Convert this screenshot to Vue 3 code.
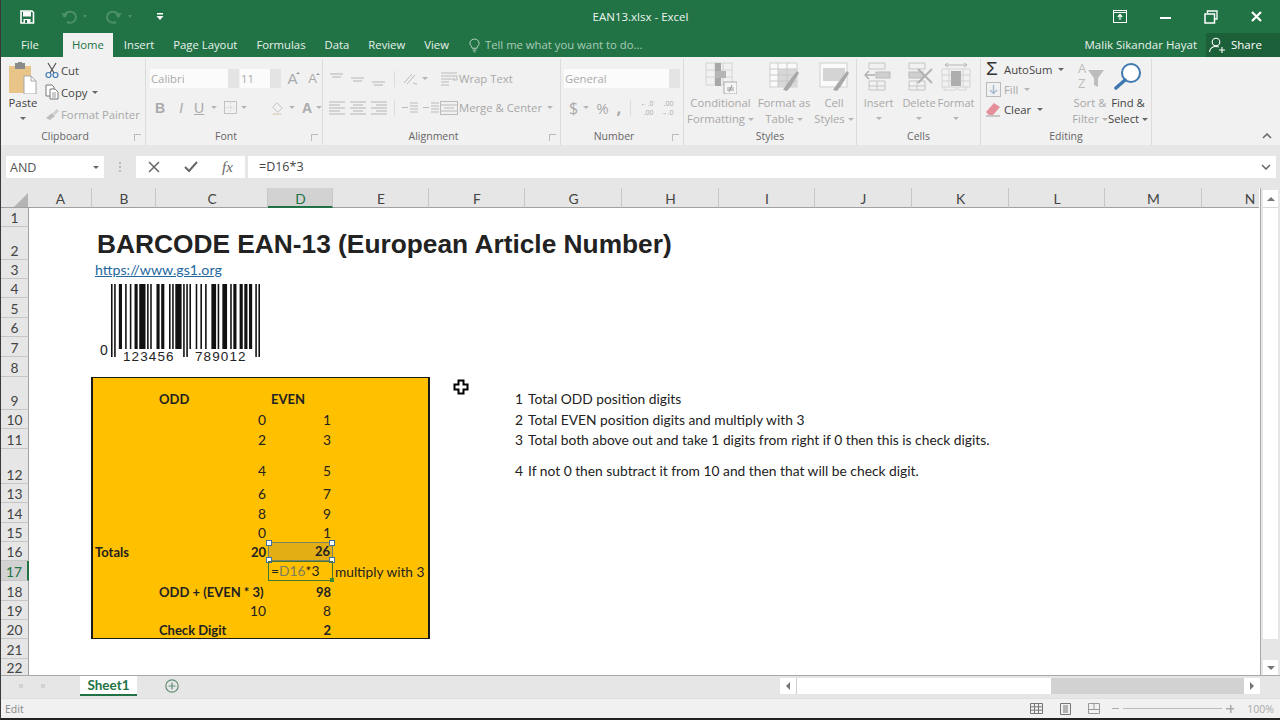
<template>
  <div class="excel">
    <!-- Title bar -->
    <div class="titlebar">
      <div class="qat">
        <svg width="16" height="16" viewBox="0 0 16 16" class="save"><path d="M2 2h11l1.500 1.500V14H2z" fill="none" stroke="#fff" stroke-width="1.600"/><rect x="4" y="2.500" width="8" height="5" fill="#fff"/><rect x="4.500" y="10" width="7" height="4" fill="#fff"/><rect x="6" y="11" width="2" height="3" fill="#217346"/></svg>
        <svg width="18" height="16" viewBox="0 0 18 16" class="undo"><path d="M4 8a6 5.500 0 1 1 3 5" fill="none" stroke="#4c9068" stroke-width="2"/><path d="M1 4l4 5 3-4.500z" fill="#4c9068"/></svg>
        <span class="qat-caret"></span>
        <svg width="18" height="16" viewBox="0 0 18 16" class="redo"><path d="M14 8a6 5.500 0 1 0-3 5" fill="none" stroke="#4c9068" stroke-width="2"/><path d="M17 4l-4 5-3-4.500z" fill="#4c9068"/></svg>
        <span class="qat-caret"></span>
        <svg width="8" height="8" viewBox="0 0 8 8" class="qat-more"><rect x="1" y="0" width="6" height="1.500" fill="#fff"/><path d="M0.500 3h7L4 7z" fill="#fff"/></svg>
      </div>
      <div class="doc-title">EAN13.xlsx - Excel</div>
      <div class="win-btns">
        <svg width="14" height="13" viewBox="0 0 14 13"><rect x="0.500" y="0.500" width="13" height="12" fill="none" stroke="#fff"/><path d="M1 2.500h12" stroke="#fff"/><path d="M7 10V5M4.800 7L7 4.500 9.200 7" fill="none" stroke="#fff" stroke-width="1.200"/></svg>
        <svg width="11" height="13" viewBox="0 0 11 13"><rect x="0" y="7" width="11" height="2" fill="#fff"/></svg>
        <svg width="14" height="14" viewBox="0 0 14 14"><path d="M3.500 3V1h9.500v8h-2" fill="none" stroke="#fff" stroke-width="1.300"/><rect x="1" y="4" width="9.500" height="9" fill="none" stroke="#fff" stroke-width="1.500"/></svg>
        <svg width="11" height="11" viewBox="0 0 11 11"><path d="M1 1l9 9M10 1l-9 9" stroke="#fff" stroke-width="2.200"/></svg>
      </div>
    </div>

    <!-- Tabs -->
    <div class="tabs">
      <span class="tab file">File</span>
      <span v-for="t in tabs" :key="t" class="tab" :class="{ active: t === 'Home' }">{{ t }}</span>
      <span class="tell">
        <svg width="11" height="15" viewBox="0 0 12 15"><path d="M3.500 10.500C3 8 1 7.500 1 5a5 4.500 0 0 1 10 0c0 2.500-2 3-2.500 5.500zM4 12.500h4M5 14.500h2" fill="none" stroke="#c8dccf" stroke-width="1"/></svg>
        Tell me what you want to do...
      </span>
      <span class="user">Malik Sikandar Hayat</span>
      <span class="share">
        <svg width="16" height="16" viewBox="0 0 16 16"><circle cx="7" cy="5" r="3.800" fill="none" stroke="#fff" stroke-width="1.100"/><path d="M0.500 15c.5-4 3-5.500 6.500-5.500 1 0 2 .2 2.800.6M10 13h6M13 10v6" fill="none" stroke="#fff" stroke-width="1.100"/></svg>
        Share
      </span>
    </div>

    <!-- Ribbon -->
    <div class="ribbon">
      <div class="group" style="width: 145px">
        <div class="group-body">
          <div class="big paste-btn">
            <div class="big-icon">
              <svg width="28" height="32" viewBox="0 0 28 32"><rect x="0" y="4" width="22" height="27" fill="#e8c488"/><rect x="6" y="1" width="10" height="6" fill="#8a8a8a"/><rect x="9" y="0" width="4" height="3" fill="#8a8a8a"/><path d="M15 14h7l5 5v13H15z" fill="#fff" stroke="#a8a8a8"/><path d="M22 14v5h5" fill="none" stroke="#a8a8a8"/></svg>
            </div>
            <div class="big-label on">Paste</div>
            <span class="caret on low"></span>
          </div>
          <div class="stack clip">
            <div class="small on">
              <svg width="14" height="16" viewBox="0 0 14 16"><path d="M3 1l6 10M11 1L5 11" stroke="#555" stroke-width="1.200"/><circle cx="3.500" cy="13" r="2.500" fill="none" stroke="#3d7ab5" stroke-width="1.200"/><circle cx="10.500" cy="13" r="2.500" fill="none" stroke="#3d7ab5" stroke-width="1.200"/></svg>
              Cut
            </div>
            <div class="small on">
              <svg width="14" height="16" viewBox="0 0 14 16"><path d="M1 1h6l2 2v9H1z" fill="#fff" stroke="#777"/><path d="M5 5h5l3 3v7H5z" fill="#fff" stroke="#777"/><path d="M7 9h4M7 11h4M7 13h4" stroke="#999"/></svg>
              Copy <span class="caret on mini"></span>
            </div>
            <div class="small off">
              <svg width="14" height="16" viewBox="0 0 14 16"><path d="M1 12l6-5 3 3-5 4z" fill="#bcbcbc"/><path d="M8 7l4-4 2 2-4 4z" fill="#cfcfcf"/></svg>
              Format Painter
            </div>
          </div>
        </div>
        <div class="group-label has-launcher">Clipboard</div>
        <span class="launcher"></span>
      </div>

      <div class="group" style="width: 177px">
        <div class="group-body rows" style="padding-left: 4px">
          <div class="row">
            <div class="combo" style="width: 89px"><span class="combo-text">Calibri</span><span class="combo-drop"></span></div>
            <div class="combo" style="width: 41px; margin-left: 1px"><span class="combo-text">11</span><span class="combo-drop"></span></div>
            <span class="font-grow big-a">A</span>
            <span class="font-grow small-a">A</span>
          </div>
          <div class="row fmt">
            <b class="fmt-b">B</b>
            <i class="fmt-i">I</i>
            <u class="fmt-u">U</u>
            <span class="caret"></span>
            <svg width="15" height="15" viewBox="0 0 15 15" class="bd"><rect x="0.500" y="0.500" width="14" height="14" fill="none" stroke="#bbb"/><path d="M7.500 2v11M2 7.500h11" stroke="#bbb" stroke-dasharray="1 2"/></svg>
            <span class="caret"></span>
            <svg width="16" height="16" viewBox="0 0 16 16" class="fill"><path d="M7 2l6 6-5 5-6-6z" fill="none" stroke="#bbb"/><path d="M2 15h10" stroke="#e0d8c8" stroke-width="2"/></svg>
            <span class="caret"></span>
            <span class="fmt-a">A</span>
            <span class="caret"></span>
          </div>
        </div>
        <div class="group-label has-launcher">Font</div>
        <span class="launcher"></span>
      </div>

      <div class="group" style="width: 238px">
        <div class="group-body">
          <div class="rows align-left">
            <div class="row icons">
              <svg v-for="a in vAligns" :key="a" width="18" height="16" viewBox="0 0 18 16"><path :d="a" fill="none" stroke="#b5b5b5"/></svg>
              <span class="sep"></span>
              <svg width="18" height="16" viewBox="0 0 18 16"><path d="M3 12L11 3M6 13l8-9M12 12l4 1" fill="none" stroke="#bbb"/></svg>
              <span class="caret"></span>
            </div>
            <div class="row icons second">
              <svg v-for="a in hAligns" :key="a" width="18" height="16" viewBox="0 0 18 16"><path :d="a" fill="none" stroke="#b5b5b5"/></svg>
              <span class="sep"></span>
              <svg width="18" height="16" viewBox="0 0 18 16"><path d="M9 3h8M9 6h8M9 9h8M9 12h8M1 7.500h6" fill="none" stroke="#bbb"/></svg>
              <svg width="18" height="16" viewBox="0 0 18 16"><path d="M9 3h8M9 6h8M9 9h8M9 12h8M1 7.500h6" fill="none" stroke="#bbb"/></svg>
            </div>
          </div>
          <div class="rows wrap-col">
            <div class="row off-text">
              <svg width="18" height="16" viewBox="0 0 18 16"><path d="M1 2h16M1 5h12M1 8h12M1 11h8M1 14h8M13 5h4v4h-4l2-2" fill="none" stroke="#bbb"/></svg>
              Wrap Text
            </div>
            <div class="row off-text second">
              <svg width="18" height="16" viewBox="0 0 18 16"><rect x="0.500" y="1.500" width="17" height="13" fill="none" stroke="#bbb"/><path d="M1 5h16M1 11h16M4 8h10" stroke="#bbb"/></svg>
              Merge &amp; Center <span class="caret"></span>
            </div>
          </div>
        </div>
        <div class="group-label has-launcher">Alignment</div>
        <span class="launcher"></span>
      </div>

      <div class="group" style="width: 123px">
        <div class="group-body rows" style="padding-left: 3px">
          <div class="row">
            <div class="combo" style="width: 116px"><span class="combo-text">General</span><span class="combo-drop"></span></div>
          </div>
          <div class="row num-row">
            <span class="dollar">$</span><span class="caret"></span>
            <span class="pct">%</span>
            <span class="comma">,</span>
            <span class="sep"></span>
            <span class="dec"><span>←.0</span><span>.00</span></span>
            <span class="dec"><span>.00</span><span>→.0</span></span>
          </div>
        </div>
        <div class="group-label has-launcher">Number</div>
        <span class="launcher"></span>
      </div>

      <div class="group" style="width: 173px">
        <div class="group-body" style="padding-left: 4px">
          <div class="big" style="width: 65px">
            <div class="big-icon">
              <svg width="32" height="32" viewBox="0 0 32 32"><path d="M1 1h26v22H1zM1 8h26M1 15h26M10 1v22M18 1v22" fill="none" stroke="#d4d4d4"/><rect x="10" y="1" width="6" height="8" fill="#a8a8a8"/><rect x="10" y="9" width="11" height="7" fill="#b5b5b5"/><rect x="10" y="16" width="6" height="8" fill="#a8a8a8"/><rect x="19" y="20" width="13" height="12" fill="#f6f6f6" stroke="#aaa"/><path d="M22 26h7M22 28h7M27 23l-3 7" stroke="#999"/></svg>
            </div>
            <div class="big-label">Conditional</div>
            <div class="big-label">Formatting <span class="caret"></span></div>
          </div>
          <div class="big" style="width: 62px">
            <div class="big-icon">
              <svg width="30" height="30" viewBox="0 0 30 30"><rect x="1" y="1" width="27" height="24" fill="#fafafa" stroke="#cfcfcf"/><rect x="9" y="7" width="19" height="18" fill="#d8d8d8"/><path d="M1 7h27M1 13h27M1 19h27M9 1v24M18 1v24" stroke="#c8c8c8"/><path d="M14 28l4-6 10-13 2 2-8 13-4 5z" fill="#a8a8a8"/></svg>
            </div>
            <div class="big-label">Format as</div>
            <div class="big-label">Table <span class="caret"></span></div>
          </div>
          <div class="big" style="width: 38px">
            <div class="big-icon">
              <svg width="30" height="30" viewBox="0 0 30 30"><rect x="1" y="1" width="27" height="24" fill="#fafafa" stroke="#cfcfcf"/><rect x="4" y="6" width="22" height="13" fill="#d4d4d4"/><path d="M14 28l4-6 10-13 2 2-8 13-4 5z" fill="#a8a8a8"/></svg>
            </div>
            <div class="big-label">Cell</div>
            <div class="big-label">Styles <span class="caret"></span></div>
          </div>
        </div>
        <div class="group-label">Styles</div>
      </div>

      <div class="group" style="width: 124px">
        <div class="group-body cells-body">
          <div class="big" style="width: 43px">
            <div class="big-icon">
              <svg width="30" height="30" viewBox="0 0 30 30"><path d="M5 1h16v6H5zM5 19h16v9H5zM13 19v9M5 24h16" fill="none" stroke="#c4c4c4"/><rect x="12" y="10" width="14" height="6" fill="#cfcfcf" stroke="#bbb"/><path d="M2 13h9M5 9l-4 4 4 4" fill="none" stroke="#b0b0b0" stroke-width="1.400"/></svg>
            </div>
            <div class="big-label">Insert</div>
            <span class="caret low"></span>
          </div>
          <div class="big" style="width: 38px">
            <div class="big-icon">
              <svg width="30" height="30" viewBox="0 0 30 30"><path d="M5 1h16v6H5zM5 19h16v9H5zM13 19v9M5 24h16" fill="none" stroke="#c4c4c4"/><rect x="5" y="10" width="14" height="6" fill="#cfcfcf" stroke="#bbb"/><path d="M14 7l14 14M28 7L14 21" stroke="#b0b0b0" stroke-width="1.800"/></svg>
            </div>
            <div class="big-label">Delete</div>
            <span class="caret low"></span>
          </div>
          <div class="big" style="width: 36px">
            <div class="big-icon">
              <svg width="30" height="32" viewBox="0 0 30 32"><path d="M4 3h22M4 3l3-2M4 3l3 2M26 3l-3-2M26 3l-3 2" fill="none" stroke="#b5b5b5"/><path d="M1 7h28v18H1zM8 7v18M22 7v18M1 13h28M1 19h28M3 25v3h12v-3M17 25v3h8v-3" fill="none" stroke="#d4d4d4"/><rect x="10" y="9" width="10" height="15" fill="#aeaeae"/></svg>
            </div>
            <div class="big-label">Format</div>
            <span class="caret low"></span>
          </div>
        </div>
        <div class="group-label">Cells</div>
      </div>

      <div class="group" style="width: 171px">
        <div class="group-body" style="padding-left: 5px">
          <div class="stack edit">
            <div class="small on">
              <span class="sigma">Σ</span>
              AutoSum <span class="caret on mini2"></span>
            </div>
            <div class="small off">
              <svg width="15" height="15" viewBox="0 0 15 15"><rect x="0.500" y="0.500" width="14" height="14" fill="none" stroke="#bbb"/><path d="M7.500 3v8M4 8l3.500 3.500L11 8" fill="none" stroke="#a5b9d0" stroke-width="1.400"/></svg>
              Fill <span class="caret"></span>
            </div>
            <div class="small on">
              <svg width="15" height="15" viewBox="0 0 15 15"><path d="M0 10l8-9 6 4-7 8H3z" fill="#e58f9c"/><path d="M0 14h14" stroke="#999"/></svg>
              Clear <span class="caret on"></span>
            </div>
          </div>
          <div class="big" style="width: 38px">
            <div class="big-icon">
              <svg width="30" height="30" viewBox="0 0 30 30"><path d="M13 8h16l-6 8v9l-4-2v-7z" fill="#bdbdbd"/></svg>
              <span class="az"><span>A</span><span>Z</span></span>
            </div>
            <div class="big-label">Sort &amp;</div>
            <div class="big-label">Filter <span class="caret"></span></div>
          </div>
          <div class="big" style="width: 38px">
            <div class="big-icon">
              <svg width="28" height="28" viewBox="0 0 28 28"><circle cx="17" cy="11" r="9" fill="#fff" stroke="#3f78b0" stroke-width="2"/><path d="M11 18L2 26" stroke="#3f78b0" stroke-width="3.500" stroke-linecap="round"/></svg>
            </div>
            <div class="big-label on">Find &amp;</div>
            <div class="big-label on">Select <span class="caret on"></span></div>
          </div>
        </div>
        <div class="group-label">Editing</div>
      </div>

      <svg width="10" height="6" viewBox="0 0 10 6" class="collapse"><path d="M1 5l4-4 4 4" fill="none" stroke="#666" stroke-width="1.500"/></svg>
    </div>

    <!-- Formula bar -->
    <div class="formula">
      <div class="namebox">AND<span class="caret on"></span></div>
      <div class="dots"></div>
      <div class="fx">
        <svg width="12" height="12" viewBox="0 0 12 12"><path d="M1 1l10 10M11 1L1 11" stroke="#666" stroke-width="1.500"/></svg>
        <svg width="14" height="12" viewBox="0 0 14 12" class="fx-check"><path d="M1 6l4 4 8-9" fill="none" stroke="#666" stroke-width="2"/></svg>
        <span class="fx-text">fx</span>
      </div>
      <div class="input">=D16*3
        <svg width="10" height="6" viewBox="0 0 10 6" class="input-drop"><path d="M1 1l4 4 4-4" fill="none" stroke="#666" stroke-width="1.500"/></svg>
      </div>
    </div>

    <!-- Sheet -->
    <div class="sheet-wrap">
      <div class="sheet">
        <div class="corner">
          <svg width="14" height="14" viewBox="0 0 14 14"><path d="M14 0v14H0z" fill="#b4b4b4"/></svg>
        </div>
        <div
          v-for="(c, i) in colNames"
          :key="c"
          class="col-head"
          :class="{ sel: c === 'D', last: c === 'N' }"
          :style="{ gridColumn: i + 2, gridRow: 1 }"
        >{{ c }}</div>
        <div
          v-for="r in rowCount"
          :key="r"
          class="row-head"
          :class="{ sel: r === 17, last: r === rowCount }"
          :style="{ gridColumn: 1, gridRow: r + 1 }"
        >{{ r }}</div>

        <div class="orange"></div>

        <div
          v-for="c in cells"
          :key="c.at"
          class="cell"
          :class="c.cls"
          :style="{ gridColumn: colIndex(c.at), gridRow: rowIndex(c.at) }"
        >{{ c.text }}</div>

        <div class="cell ref">
          26
          <i class="handle tl"></i><i class="handle tr"></i><i class="handle bl"></i><i class="handle br"></i>
        </div>
        <div class="cell editing">=<span class="ref-text">D16</span>*3<i class="fill-handle"></i></div>

        <!-- picture floating on the sheet -->
        <svg class="barcode" width="164" height="82" viewBox="0 0 164 82">
          <rect
            v-for="b in bars"
            :key="b.x"
            :x="b.x"
            y="1"
            :width="b.w"
            :height="b.long ? 73 : 65"
            fill="#111"
          />
          <text x="0" y="72" class="bar-text zero">0</text>
          <text x="23" y="78" class="bar-text">123456</text>
          <text x="95" y="78" class="bar-text">789012</text>
        </svg>

        <svg class="pointer" width="16" height="16" viewBox="0 0 16 16"><path d="M5.500 1.500h5v4h4v5h-4v4h-5v-4h-4v-5h4z" fill="#fff" stroke="#000" stroke-width="2"/></svg>
      </div>
      <div class="vscroll">
        <div class="sb-btn"><span class="up"></span></div>
        <div class="sb-thumb"></div>
        <div class="sb-btn down-btn"><span class="down"></span></div>
      </div>
    </div>

    <!-- Sheet tabs -->
    <div class="sheetbar">
      <span class="nav"></span><span class="nav"></span>
      <div class="sheet-tab">Sheet1</div>
      <svg width="14" height="14" viewBox="0 0 14 14" class="add"><circle cx="7" cy="7" r="6.200" fill="none" stroke="#5f8f74" stroke-width="1.200"/><path d="M7 3.500v7M3.500 7h7" stroke="#5f8f74" stroke-width="1.200"/></svg>
      <div class="hscroll">
        <div class="sb-btn h"><span class="left"></span></div>
        <div class="h-thumb"></div>
        <div class="sb-btn h"><span class="right"></span></div>
      </div>
    </div>

    <!-- Status bar -->
    <div class="status">
      <span class="mode">Edit</span>
      <div class="views">
        <svg width="13" height="11" viewBox="0 0 13 11"><path d="M.5.500h12v10H.5zM.5 3.800h12M.5 7.200h12M4.500.500v10M8.500.500v10" fill="none" stroke="#777"/></svg>
        <svg width="11" height="12" viewBox="0 0 11 12"><path d="M.5.500h10v11H.5zM3 3h5M3 5h5M3 7h5M3 9h5" fill="none" stroke="#777"/></svg>
        <svg width="12" height="11" viewBox="0 0 12 11"><path d="M.5.500h11v10H.5zM6 .500v6M.5 6.500h11" fill="none" stroke="#999"/></svg>
      </div>
      <div class="zoom">
        <span class="zoom-m"></span>
        <span class="zoom-line"></span>
        <span class="zoom-p"></span>
      </div>
      <span class="pct-zoom">100%</span>
    </div>
  </div>
</template>

<script setup>
const tabs = ['Home', 'Insert', 'Page Layout', 'Formulas', 'Data', 'Review', 'View']
const colNames = 'ABCDEFGHIJKLMN'.split('')
const rowCount = 22

const vAligns = ['M2 3h13M4 6h9', 'M2 7h13M4 10h9', 'M2 11h13M4 14h9']
const hAligns = [
  'M1 2h16M1 5h11M1 8h16M1 11h11M1 14h16',
  'M1 2h16M4 5h10M1 8h16M4 11h10M1 14h16',
  'M1 2h16M6 5h11M1 8h16M6 11h11M1 14h16',
]

const cells = [
  { at: 'B2', text: 'BARCODE EAN-13 (European Article Number)', cls: 'title' },
  { at: 'B3', text: 'https://www.gs1.org', cls: 'link' },
  { at: 'C9', text: 'ODD', cls: 'bold r9' },
  { at: 'D9', text: 'EVEN', cls: 'bold r9' },
  { at: 'C10', text: '0', cls: 'num' },
  { at: 'D10', text: '1', cls: 'num' },
  { at: 'C11', text: '2', cls: 'num' },
  { at: 'D11', text: '3', cls: 'num' },
  { at: 'C12', text: '4', cls: 'num tall' },
  { at: 'D12', text: '5', cls: 'num tall' },
  { at: 'C13', text: '6', cls: 'num' },
  { at: 'D13', text: '7', cls: 'num' },
  { at: 'C14', text: '8', cls: 'num' },
  { at: 'D14', text: '9', cls: 'num' },
  { at: 'C15', text: '0', cls: 'num' },
  { at: 'D15', text: '1', cls: 'num' },
  { at: 'B16', text: 'Totals', cls: 'bold' },
  { at: 'C16', text: '20', cls: 'num bold' },
  { at: 'E17', text: 'multiply with 3', cls: 'mul' },
  { at: 'C18', text: 'ODD + (EVEN * 3)', cls: 'bold' },
  { at: 'D18', text: '98', cls: 'num bold' },
  { at: 'C19', text: '10', cls: 'num' },
  { at: 'D19', text: '8', cls: 'num' },
  { at: 'C20', text: 'Check Digit', cls: 'bold' },
  { at: 'D20', text: '2', cls: 'num bold' },
  { at: 'F9', text: '1', cls: 'num r9' },
  { at: 'G9', text: 'Total ODD position digits', cls: 'plain r9' },
  { at: 'F10', text: '2', cls: 'num' },
  { at: 'G10', text: 'Total EVEN position digits and multiply with 3', cls: 'plain' },
  { at: 'F11', text: '3', cls: 'num' },
  { at: 'G11', text: 'Total both above out and take 1 digits from right if 0 then this is check digits.', cls: 'plain' },
  { at: 'F12', text: '4', cls: 'num tall' },
  { at: 'G12', text: 'If not 0 then subtract it from 10 and then that will be check digit.', cls: 'plain tall' },
]

function colIndex(at) {
  return at.charCodeAt(0) - 63
}

function rowIndex(at) {
  return Number(at.slice(1)) + 1
}

// EAN-13 bars for 0 123456 789012, first digit 0 means all left digits use the L set
const L = ['0001101', '0011001', '0010011', '0111101', '0100011', '0110001', '0101111', '0111011', '0110111', '0001011']
const flip = (s) => s.replace(/./g, (c) => (c === '0' ? '1' : '0'))

function buildBars() {
  const left = '123456'.split('').map((d) => L[d]).join('')
  const right = '789012'.split('').map((d) => flip(L[d])).join('')
  const code = '101' + left + '01010' + right + '101'
  const mod = 149 / 95
  const out = []
  let i = 0
  while (i < code.length) {
    if (code[i] === '1') {
      let n = 1
      while (code[i + n] === '1') n++
      const long = i < 3 || i > 91 || (i >= 45 && i < 50)
      out.push({ x: 11 + i * mod, w: n * mod, long })
      i += n
    } else {
      i++
    }
  }
  return out
}

const bars = buildBars()
</script>

<style>
html, body {
  margin: 0;
  padding: 0;
  background: #fff;
  overflow: hidden;
}
</style>

<style scoped>
.excel {
  width: 1280px;
  height: 720px;
  box-sizing: border-box;
  border-left: 1px solid #3a3a3a;
  border-bottom: 2px solid #222;
  display: flex;
  flex-direction: column;
  overflow: hidden;
  font-family: "Open Sans", "Liberation Sans", sans-serif;
  font-size: 11.3px;
  color: #444;
  background: #e6e6e6;
}

/* title bar */
.titlebar {
  height: 33px;
  flex: none;
  background: #217346;
  color: #fff;
  display: grid;
  grid-template-columns: 1fr auto 1fr;
  align-items: center;
}
.qat {
  display: flex;
  align-items: center;
}
.save {
  margin-left: 18px;
}
.undo {
  margin-left: 25px;
}
.redo {
  margin-left: 18px;
}
.qat-caret {
  width: 0;
  height: 0;
  margin-left: 5px;
  border-top: 3px solid #4c9068;
  border-left: 2px solid transparent;
  border-right: 2px solid transparent;
}
.qat-more {
  margin-left: 24px;
}
.doc-title {
  font-size: 11.5px;
  color: #eef5f0;
}
.win-btns {
  display: flex;
  align-items: center;
  justify-content: flex-end;
  gap: 33px;
  padding-right: 18px;
}

/* tabs */
.tabs {
  height: 24px;
  flex: none;
  background: #217346;
  color: #e8f1eb;
  display: flex;
  align-items: stretch;
  line-height: 24px;
}
.tab {
  padding: 0 10px;
  margin-right: -1px;
}
.tab.file {
  padding: 0;
  margin: 0 24px 0 20px;
}
.tab.active {
  background: #f1f1f1;
  color: #217346;
  padding: 0 9px;
  margin-right: 1px;
}
.tell {
  display: flex;
  align-items: center;
  gap: 5px;
  margin-left: 11px;
  color: #a9cbb6;
}
.user {
  margin-left: auto;
  margin-right: 9px;
  font-size: 11.5px;
}
.share {
  width: 74px;
  box-sizing: border-box;
  background: #1c6039;
  display: flex;
  align-items: center;
  gap: 6px;
  padding-left: 3px;
  color: #fff;
  font-size: 11.5px;
}

/* ribbon */
.ribbon {
  height: 88px;
  flex: none;
  position: relative;
  display: flex;
  background: #f1f1f1;
}
.group {
  position: relative;
  box-sizing: border-box;
  flex: none;
  display: flex;
  flex-direction: column;
  height: 86px;
  margin-top: 2px;
  border-right: 1px solid #dcdcdc;
}
.group-body {
  flex: 1;
  display: flex;
  min-height: 0;
}
.group-body.rows,
.rows {
  flex-direction: column;
  display: flex;
  padding-top: 10px;
}
.row {
  display: flex;
  align-items: center;
  height: 19px;
  margin-bottom: 10px;
  white-space: nowrap;
}
.group-label {
  height: 18px;
  line-height: 19px;
  text-align: center;
  font-size: 10.5px;
  color: #666;
}
.group-label.has-launcher {
  padding-right: 16px;
}
.launcher {
  position: absolute;
  right: 4px;
  bottom: 4px;
  width: 6px;
  height: 6px;
  border-left: 1px solid #bbb;
  border-top: 1px solid #bbb;
}
.caret {
  display: inline-block;
  width: 0;
  height: 0;
  vertical-align: middle;
  border-top: 3px solid #b5b5b5;
  border-left: 3px solid transparent;
  border-right: 3px solid transparent;
}
.caret.on {
  border-top-color: #666;
}
.caret.mini {
  margin-left: 6px;
}
.caret.mini2 {
  margin-left: 7px;
}
.caret.low {
  margin-top: 6px;
}

.big {
  flex: none;
  display: flex;
  flex-direction: column;
  align-items: center;
  color: #a8a8a8;
  white-space: nowrap;
}
.big-icon {
  position: relative;
  flex: none;
  height: 36px;
  padding-top: 3px;
  box-sizing: border-box;
  display: flex;
  justify-content: center;
}
.big-label {
  flex: none;
  height: 16px;
  line-height: 16px;
}
.big-label.on,
.on {
  color: #444;
}
.cells-body .big-label {
  font-size: 11px;
}
.paste-btn {
  width: 44px;
}
.stack {
  display: flex;
  flex-direction: column;
  white-space: nowrap;
}
.clip .small {
  height: 22px;
}
.small {
  display: flex;
  align-items: center;
  gap: 2px;
}
.small.off {
  color: #a8a8a8;
}
.small .caret {
  margin-left: 3px;
}
.edit {
  width: 85px;
}
.edit .small {
  height: 20px;
  gap: 3px;
}
.sigma {
  width: 15px;
  font-size: 19px;
  line-height: 20px;
  font-family: "Liberation Sans", sans-serif;
  color: #333;
}
.az {
  position: absolute;
  left: 3px;
  top: 2px;
  display: flex;
  flex-direction: column;
  font-size: 13px;
  line-height: 15px;
  color: #bdbdbd;
}

.combo {
  display: flex;
  height: 19px;
  background: #fbfbfb;
  color: #aaa;
  line-height: 19px;
}
.combo-text {
  flex: 1;
  padding-left: 1px;
}
.combo-drop {
  width: 11px;
  background: #e4e4e4;
}
.font-grow {
  position: relative;
  color: #aaa;
  margin-left: 3px;
  width: 17px;
  text-align: center;
  font-family: "Liberation Sans", sans-serif;
}
.font-grow::after {
  content: "";
  position: absolute;
  right: 1px;
  top: 2px;
  border-bottom: 2px solid #999;
  border-left: 2px solid transparent;
  border-right: 2px solid transparent;
}
.big-a {
  font-size: 15px;
}
.small-a {
  font-size: 13px;
}
.fmt {
  color: #aaa;
  font-size: 14px;
  font-family: "Liberation Sans", sans-serif;
}
.fmt-b {
  margin-left: 5px;
}
.fmt-i {
  margin-left: 14px;
}
.fmt-u {
  margin-left: 11px;
}
.fmt .caret {
  margin-left: 4px;
}
.fmt .fmt-u + .caret {
  margin-left: 7px;
}
.bd {
  margin-left: 7px;
}
.fill {
  margin-left: 24px;
  margin-right: 0;
}
.fmt-a {
  margin-left: 7px;
  font-weight: bold;
}
.align-left {
  width: 117px;
  padding-left: 5px;
  box-sizing: border-box;
}
.icons {
  gap: 3px;
}
.sep {
  width: 1px;
  height: 16px;
  background: #dcdcdc;
  margin: 0 3px;
}
.wrap-col {
  color: #a8a8a8;
}
.off-text {
  gap: 1px;
}
.off-text .caret {
  margin-left: 4px;
}
.num-row {
  color: #aaa;
  font-size: 11.5px;
}
.dollar {
  margin-left: 5px;
  font-size: 16px;
  margin-right: 5px;
}
.pct {
  margin-left: 7px;
  font-size: 15px;
}
.comma {
  margin-left: 8px;
  font-size: 17px;
  font-weight: 700;
  line-height: 10px;
}
.num-row .sep {
  margin: 0 2px 0 9px;
}
.dec {
  display: flex;
  flex-direction: column;
  font-size: 7px;
  line-height: 9px;
  width: 20px;
  text-align: right;
}
.collapse {
  position: absolute;
  right: 8px;
  bottom: 6px;
}

/* formula bar */
.formula {
  height: 43px;
  flex: none;
  box-sizing: border-box;
  padding: 11px 4px 10px 5px;
  display: flex;
  background: #e6e6e6;
  color: #555;
}
.namebox {
  width: 98px;
  box-sizing: border-box;
  background: #fff;
  display: flex;
  align-items: center;
  justify-content: space-between;
  padding: 0 5px 0 4px;
  font-size: 12.5px;
}
.dots {
  width: 32px;
  position: relative;
}
.dots::after {
  content: "";
  position: absolute;
  left: 15px;
  top: 6px;
  height: 10px;
  border-left: 2px dotted #bbb;
}
.fx {
  width: 109px;
  box-sizing: border-box;
  background: #fff;
  display: flex;
  align-items: center;
  padding-left: 12px;
}
.fx-check {
  margin-left: 24px;
}
.fx-text {
  margin-left: 24px;
  font-family: "Liberation Serif", serif;
  font-style: italic;
  font-size: 15px;
  color: #666;
}
.input {
  flex: 1;
  margin-left: 3px;
  position: relative;
  background: #fff;
  line-height: 22px;
  padding-left: 11px;
  font-size: 12.5px;
  color: #444;
}
.input-drop {
  position: absolute;
  right: 5px;
  top: 8px;
}

/* sheet */
.sheet-wrap {
  height: 487px;
  flex: none;
  display: flex;
  background: #e6e6e6;
}
.sheet {
  position: relative;
  width: 1259px;
  flex: none;
  background: #fff;
  display: grid;
  grid-template-columns: 28px 63px 64px 112px 65px 96px 96px 97px 97px 96px 97px 97px 96px 97px 57px;
  grid-template-rows: 20px 19px 33px 19px 19px 20px 19px 20px 20px 33px 19px 20px 35px 19px 20px 19px 19px 20px 20px 19px 19px 20px 16px;
  font-family: Lato, sans-serif;
  font-size: 13.8px;
  color: #222;
  overflow: hidden;
  border-right: 1px solid #a8a8a8;
  box-sizing: content-box;
}
.corner {
  grid-column: 1;
  grid-row: 1;
  background: #e6e6e6;
  border-bottom: 1px solid #a0a0a0;
  box-sizing: border-box;
  padding: 5px 0 0 13px;
}
.corner svg {
  display: block;
}
.col-head {
  background: #e6e6e6;
  border-right: 1px solid #c6c6c6;
  border-bottom: 1px solid #a0a0a0;
  box-sizing: border-box;
  text-align: center;
  line-height: 21px;
  color: #444;
  min-width: 0;
  padding-left: 1px;
}
.col-head.last {
  padding-left: 39px;
  border-right: 0;
}
.col-head.sel {
  background: #d2d2d2;
  color: #217346;
  border-bottom: 2px solid #217346;
}
.row-head {
  background: #e6e6e6;
  border-right: 1px solid #a0a0a0;
  border-bottom: 1px solid #c6c6c6;
  box-sizing: border-box;
  text-align: center;
  display: flex;
  align-items: flex-end;
  justify-content: center;
  line-height: 15px;
  padding-bottom: 1px;
  color: #444;
  overflow: hidden;
}
.row-head.last {
  border-bottom: 0;
  padding-bottom: 0;
}
.row-head.sel {
  background: #d2d2d2;
  color: #217346;
  border-right: 2px solid #217346;
}
.orange {
  grid-column: 3 / 7;
  grid-row: 10 / 22;
  margin: 0 -1px;
  background: #ffc000;
  border-style: solid;
  border-color: #1a1a1a;
  border-width: 1.500px 2px 1.500px 2px;
  box-sizing: border-box;
}
.cell {
  display: flex;
  align-items: flex-end;
  white-space: nowrap;
  line-height: 18px;
  padding: 0 3px 0;
  min-width: 0;
  box-sizing: border-box;
  color: #222;
}
.cell.bold {
  font-weight: 700;
  font-size: 13px;
}
.cell.num {
  justify-content: flex-end;
  padding-right: 2px;
}
.cell.r9 {
  padding-bottom: 2px;
}
.cell.tall {
  padding-bottom: 4px;
}
.cell.plain {
  padding-left: 3px;
}
.cell.mul {
  padding-left: 2px;
  font-size: 13.7px;
}
.cell.title {
  font-family: "Liberation Sans", sans-serif;
  font-weight: 700;
  font-size: 26.3px;
  padding-left: 5px;
  padding-bottom: 2px;
  line-height: 28px;
}
.cell.link {
  color: #26689e;
  font-size: 14.2px;
  text-decoration: underline;
}
.cell.ref {
  grid-column: 5;
  grid-row: 17;
  position: relative;
  justify-content: flex-end;
  font-weight: 700;
  font-size: 13px;
  background: #e2ae14;
  border: 1px solid #7c8268;
  padding-right: 2px;
}
.handle {
  position: absolute;
  width: 4px;
  height: 4px;
  background: #fff;
  border: 1px solid #3f6f9a;
}
.tl {
  left: -3px;
  top: -3px;
}
.tr {
  right: -3px;
  top: -3px;
}
.bl {
  left: -3px;
  bottom: -3px;
}
.br {
  right: -3px;
  bottom: -3px;
}
.cell.editing {
  grid-column: 5;
  grid-row: 18;
  position: relative;
  border: 1.500px solid #47752f;
  padding-left: 2px;
  align-items: center;
  padding-bottom: 0;
}
.ref-text {
  color: #7c7c5e;
}
.fill-handle {
  position: absolute;
  right: -2px;
  bottom: -2px;
  width: 4px;
  height: 4px;
  background: #3f8a2c;
}
.barcode {
  position: absolute;
  left: 99px;
  top: 95px;
  overflow: visible;
}
.bar-text {
  font-family: "Liberation Sans", sans-serif;
  font-size: 13.5px;
  letter-spacing: 1.100px;
  fill: #222;
}
.bar-text.zero {
  font-size: 14px;
}
.pointer {
  position: absolute;
  left: 452px;
  top: 191px;
}

/* scroll bars */
.vscroll {
  flex: 1;
  display: flex;
  flex-direction: column;
  padding: 2px 2px 0;
}
.sb-btn {
  background: #fff;
  height: 17px;
  display: flex;
  align-items: center;
  justify-content: center;
  flex: none;
}
.sb-thumb {
  background: #fff;
  height: 431px;
  flex: none;
  border-top: 1px solid #d8d8d8;
}
.down-btn {
  margin-top: auto;
  height: 15px;
}
.up {
  border-bottom: 4px solid #777;
  border-left: 4px solid transparent;
  border-right: 4px solid transparent;
}
.down {
  border-top: 4px solid #777;
  border-left: 4px solid transparent;
  border-right: 4px solid transparent;
}
.left {
  border-right: 4px solid #777;
  border-top: 4px solid transparent;
  border-bottom: 4px solid transparent;
}
.right {
  border-left: 4px solid #777;
  border-top: 4px solid transparent;
  border-bottom: 4px solid transparent;
}

/* sheet tabs */
.sheetbar {
  height: 23px;
  flex: none;
  box-sizing: border-box;
  display: flex;
  align-items: flex-start;
  background: #e6e6e6;
  border-top: 1px solid #a8a8a8;
  position: relative;
}
.nav {
  width: 4px;
  height: 4px;
  margin: 8px 0 0 18px;
  background: #d2d2d2;
}
.sheet-tab {
  margin-left: 35px;
  width: 57px;
  height: 20px;
  box-sizing: border-box;
  background: #fff;
  border-bottom: 2px solid #217346;
  color: #217346;
  font-weight: 700;
  font-size: 13.5px;
  text-align: center;
  line-height: 18px;
  font-family: Lato, sans-serif;
}
.add {
  margin: 3px 0 0 28px;
}
.hscroll {
  margin-left: auto;
  margin-right: 20px;
  margin-top: 2px;
  width: 480px;
  height: 16px;
  display: flex;
  background: #d2d2d2;
  justify-content: space-between;
}
.sb-btn.h {
  width: 16px;
  height: 16px;
}
.h-thumb {
  width: 254px;
  background: #fff;
  margin-right: auto;
  border-left: 1px solid #d0d0d0;
}

/* status bar */
.status {
  height: 20px;
  flex: none;
  display: flex;
  align-items: center;
  background: #f1f1f1;
  font-size: 10.5px;
  color: #888;
  border-top: 1px solid #e0e0e0;
  box-sizing: border-box;
}
.mode {
  margin-left: 4px;
}
.views {
  margin-left: auto;
  display: flex;
  align-items: center;
  gap: 17px;
}
.zoom {
  display: flex;
  align-items: center;
  margin-left: 12px;
  width: 122px;
}
.zoom-m {
  width: 7px;
  height: 1.500px;
  background: #aaa;
}
.zoom-line {
  flex: 1;
  height: 1px;
  margin: 0 4px;
  background: #bbb;
}
.zoom-p {
  width: 8px;
  height: 8px;
  background:
    linear-gradient(#aaa, #aaa) center / 8px 1.500px no-repeat,
    linear-gradient(#aaa, #aaa) center / 1.500px 8px no-repeat;
}
.pct-zoom {
  margin: 0 6px 0 13px;
  color: #aaa;
}
</style>
